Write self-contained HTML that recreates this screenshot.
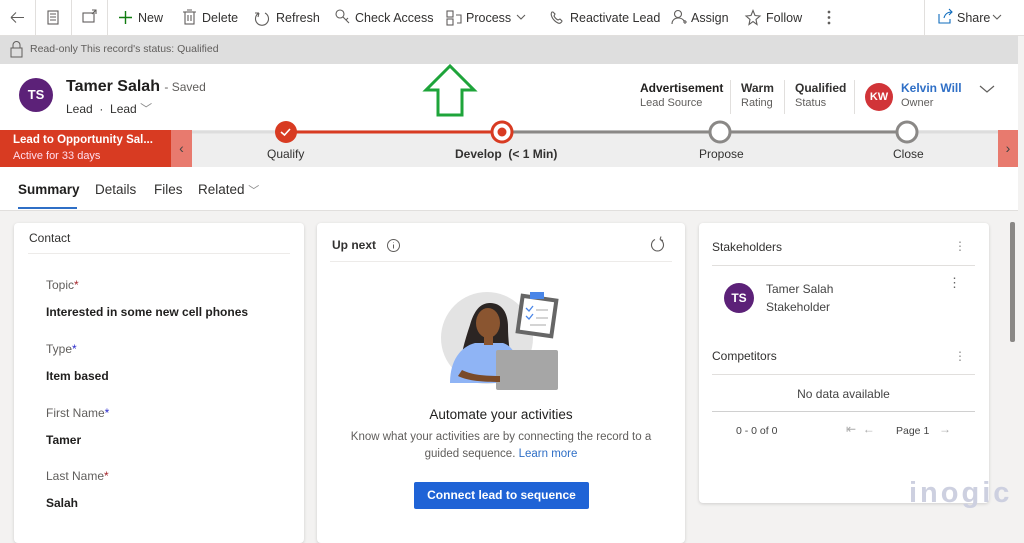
<!DOCTYPE html>
<html><head><meta charset="utf-8"><style>
*{box-sizing:border-box;margin:0;padding:0}
body{width:1024px;height:528px;overflow:hidden;font-family:"Liberation Sans",sans-serif;background:#f3f2f1;position:relative;color:#323130}
.a{position:absolute;white-space:nowrap}
.tb{font-size:12.5px;color:#323130}
.sep{position:absolute;top:0;width:1px;height:35px;background:#e1dfdd}
.card{position:absolute;background:#fff;border-radius:4px;box-shadow:0 1px 3px rgba(0,0,0,.15)}
.lbl{font-size:12px;color:#605e5c}
.val{font-size:12px;color:#201f1e;font-weight:bold}
.req{color:#a4262c}
</style></head><body>
<!-- toolbar -->
<div class="a" style="left:0;top:0;width:1024px;height:36px;background:#fff;border-bottom:1px solid #e1dfdd"></div>
<div class="sep" style="left:35px"></div><div class="sep" style="left:71px"></div><div class="sep" style="left:107px"></div><div class="sep" style="left:924px"></div>
<svg class="a" style="left:0;top:0" width="1024" height="36" fill="none" stroke="#605e5c" stroke-width="1.1">
<path d="M11 17.5h13M11 17.5l5-5M11 17.5l5 5"/>
<rect x="48" y="11" width="10" height="13"/><path d="M50 14h6M50 17h6M50 20h6"/>
<rect x="83" y="13" width="11" height="9"/><path d="M92 10l4 0 0 4M96 10l-4 4"/>
<path d="M119 17.5h13M125.5 11v13" stroke="#107c10" stroke-width="1.4"/>
<rect x="185" y="12" width="9" height="12"/><path d="M183 12h13M187 10h5M188 15v6M191 15v6"/>
<path d="M259 13a6.5 6.5 0 1 0 6 0M259 13l-1 4M259 13l-4 0"/>
<circle cx="340" cy="14" r="4"/><path d="M343 17l6 6M346 20l2-2"/>
<rect x="447" y="11" width="6" height="6"/><rect x="447" y="19" width="6" height="6"/><path d="M456 15h5v8h-4"/>
<path d="M517 15l4 4 4-4"/>
<path d="M552 12c-2 2 0 8 6 11 2 1 4-1 4-2l-2-2-2 1c-2-1-3-2-4-4l1-2-2-2z"/>
<circle cx="678" cy="14" r="3.5"/><path d="M672 24c0-4 3-6 6-6s5 1 6 3M683 22h4M685 20v4"/>
<path d="M753 10.5l2 5 5 .5-4 3.5 1 5-4-3-4 3 1-5-4-3.5 5-.5z"/>
<circle cx="829" cy="12" r=".8" fill="#605e5c"/><circle cx="829" cy="17.5" r=".8" fill="#605e5c"/><circle cx="829" cy="23" r=".8" fill="#605e5c"/>
<path d="M939 14v9h11v-4M944 18c1-4 4-6 8-6M949 9l3 3-3 3" stroke="#0f6cbd"/>
<path d="M993 15l4 4 4-4"/>
</svg>
<div class="a tb" style="left:138px;top:11px">New</div>
<div class="a tb" style="left:202px;top:11px">Delete</div>
<div class="a tb" style="left:276px;top:11px">Refresh</div>
<div class="a tb" style="left:355px;top:11px">Check Access</div>
<div class="a tb" style="left:466px;top:11px">Process</div>
<div class="a tb" style="left:570px;top:11px">Reactivate Lead</div>
<div class="a tb" style="left:691px;top:11px">Assign</div>
<div class="a tb" style="left:766px;top:11px">Follow</div>
<div class="a tb" style="left:957px;top:11px">Share</div>
<!-- readonly bar -->
<div class="a" style="left:0;top:36px;width:1018px;height:28px;background:#dedede"></div>
<svg class="a" style="left:9px;top:40px" width="16" height="20" fill="none" stroke="#605e5c" stroke-width="1"><rect x="2" y="8" width="11" height="9"/><path d="M4 8V5a3.5 3.5 0 0 1 7 0v3"/></svg>
<div class="a" style="left:30px;top:43px;font-size:10.5px;color:#605e5c">Read-only This record's status: Qualified</div>
<!-- header -->
<div class="a" style="left:0;top:64px;width:1018px;height:66px;background:#fff"></div>
<div class="a" style="left:1018px;top:36px;width:6px;height:492px;background:#f3f2f1"></div>
<div class="a" style="left:19px;top:78px;width:34px;height:34px;border-radius:50%;background:#5c2178;color:#fff;font-size:13px;font-weight:bold;text-align:center;line-height:34px">TS</div>
<div class="a" style="left:66px;top:78px;font-size:16px;font-weight:bold;color:#201f1e">Tamer Salah <span style="font-size:12px;font-weight:normal;color:#605e5c">- Saved</span></div>
<div class="a" style="left:66px;top:100px;font-size:12px;color:#323130">Lead &nbsp;·&nbsp; Lead <span style="color:#888">﹀</span></div>
<svg class="a" style="left:420px;top:62px" width="60" height="58"><path d="M30 4L6 28h12v25h24V28h12z" fill="none" stroke="#1ea43a" stroke-width="3"/></svg>
<div class="a" style="left:640px;top:81px;font-size:12px;font-weight:bold;color:#201f1e">Advertisement</div>
<div class="a lbl" style="left:640px;top:97px;font-size:11px">Lead Source</div>
<div class="a" style="left:730px;top:80px;width:1px;height:34px;background:#e1dfdd"></div>
<div class="a" style="left:741px;top:81px;font-size:12px;font-weight:bold">Warm</div>
<div class="a lbl" style="left:741px;top:97px;font-size:11px">Rating</div>
<div class="a" style="left:784px;top:80px;width:1px;height:34px;background:#e1dfdd"></div>
<div class="a" style="left:795px;top:81px;font-size:12px;font-weight:bold">Qualified</div>
<div class="a lbl" style="left:795px;top:97px;font-size:11px">Status</div>
<div class="a" style="left:854px;top:80px;width:1px;height:34px;background:#e1dfdd"></div>
<div class="a" style="left:865px;top:83px;width:28px;height:28px;border-radius:50%;background:#d13438;color:#fff;font-size:11px;font-weight:bold;text-align:center;line-height:28px">KW</div>
<div class="a" style="left:901px;top:81px;font-size:12px;font-weight:bold;color:#2f6fc6">Kelvin Will</div>
<div class="a lbl" style="left:901px;top:97px;font-size:11px">Owner</div>
<svg class="a" style="left:978px;top:82px" width="18" height="14"><path d="M2 4l7 6 7-6" fill="none" stroke="#605e5c" stroke-width="1.2"/></svg>
<!-- BPF -->
<div class="a" style="left:0;top:130px;width:1018px;height:37px;background:#eeeeee"></div>
<div class="a" style="left:0;top:130px;width:171px;height:37px;background:#d83b22"></div>
<div class="a" style="left:13px;top:134px;font-size:11.5px;font-weight:bold;color:#fff">Lead to Opportunity Sal...</div>
<div class="a" style="left:13px;top:150px;font-size:11px;color:#fde">Active for 33 days</div>
<div class="a" style="left:171px;top:130px;width:21px;height:37px;background:#e87a6e;color:#444;font-size:14px;text-align:center;line-height:37px">‹</div>
<div class="a" style="left:998px;top:130px;width:20px;height:37px;background:#e87a6e;color:#444;font-size:14px;text-align:center;line-height:37px">›</div>
<svg class="a" style="left:192px;top:118px" width="806" height="30">
<line x1="0" y1="14" x2="806" y2="14" stroke="#ddd" stroke-width="3"/>
<line x1="94" y1="14" x2="310" y2="14" stroke="#d83b22" stroke-width="3"/>
<line x1="310" y1="14" x2="715" y2="14" stroke="#8a8886" stroke-width="3"/>
<circle cx="94" cy="14" r="11" fill="#d83b22"/><path d="M89 14l3.5 3 5.5-6" stroke="#fff" fill="none" stroke-width="1.6"/>
<circle cx="310" cy="14" r="10" fill="#fff" stroke="#d83b22" stroke-width="3"/><circle cx="310" cy="14" r="4.5" fill="#d83b22"/>
<circle cx="528" cy="14" r="10" fill="#fff" stroke="#8a8886" stroke-width="3"/>
<circle cx="715" cy="14" r="10" fill="#fff" stroke="#8a8886" stroke-width="3"/>
</svg>
<div class="a" style="left:267px;top:147px;font-size:12px">Qualify</div>
<div class="a" style="left:455px;top:147px;font-size:12px;font-weight:bold">Develop &nbsp;(&lt; 1 Min)</div>
<div class="a" style="left:699px;top:147px;font-size:12px">Propose</div>
<div class="a" style="left:893px;top:147px;font-size:12px">Close</div>
<!-- tabs -->
<div class="a" style="left:0;top:167px;width:1018px;height:44px;background:#fff;border-bottom:1px solid #e1dfdd"></div>
<div class="a" style="left:18px;top:182px;font-size:13.5px;font-weight:bold;color:#201f1e">Summary</div>
<div class="a" style="left:18px;top:207px;width:59px;height:2px;background:#2f6fc6"></div>
<div class="a" style="left:95px;top:182px;font-size:13.5px">Details</div>
<div class="a" style="left:154px;top:182px;font-size:13.5px">Files</div>
<div class="a" style="left:198px;top:182px;font-size:13.5px">Related <span style="color:#888;font-size:11px">﹀</span></div>
<!-- contact card -->
<div class="card" style="left:14px;top:223px;width:290px;height:320px"></div>
<div class="a" style="left:29px;top:231px;font-size:12px;color:#323130">Contact</div>
<div class="a" style="left:28px;top:253px;width:262px;height:1px;background:#edebe9"></div>
<div class="a lbl" style="left:46px;top:278px">Topic<span class="req">*</span></div>
<div class="a val" style="left:46px;top:305px">Interested in some new cell phones</div>
<div class="a lbl" style="left:46px;top:342px">Type<span style="color:#2b2bcc">*</span></div>
<div class="a val" style="left:46px;top:369px">Item based</div>
<div class="a lbl" style="left:46px;top:406px">First Name<span style="color:#2b2bcc">*</span></div>
<div class="a val" style="left:46px;top:433px">Tamer</div>
<div class="a lbl" style="left:46px;top:469px">Last Name<span class="req">*</span></div>
<div class="a val" style="left:46px;top:496px">Salah</div>
<!-- up next -->
<div class="card" style="left:317px;top:223px;width:368px;height:320px"></div>
<div class="a" style="left:332px;top:238px;font-size:12px;font-weight:bold">Up next</div>
<svg class="a" style="left:386px;top:238px" width="16" height="16" fill="none" stroke="#605e5c"><circle cx="7.5" cy="7.5" r="6"/><path d="M7.5 6.5v4M7.5 4.5v.5"/></svg>
<svg class="a" style="left:649px;top:236px" width="18" height="18" fill="none" stroke="#605e5c" stroke-width="1.1"><path d="M6 3.5a6 6 0 1 0 5 0M11 3.5l1-3M11 3.5l3 1"/></svg>
<div class="a" style="left:330px;top:261px;width:342px;height:1px;background:#edebe9"></div>
<svg class="a" style="left:430px;top:288px" width="135" height="110">
<circle cx="57" cy="50" r="46" fill="#e3e3e3"/>
<path d="M30 95c-2-20 4-40 10-58 4-14 10-22 20-22 12 0 18 10 18 24 0 20 4 34 6 50z" fill="#2b2523"/>
<ellipse cx="58" cy="35" rx="12" ry="15" fill="#8a5530"/>
<path d="M20 95c0-22 10-36 25-40h28c12 4 16 16 16 40z" fill="#8fb4f5"/>
<rect x="54" y="47" width="9" height="10" fill="#8a5530"/>
<rect x="66" y="62" width="62" height="40" rx="2" fill="#a6a6a6"/>
<path d="M28 88c8 4 20 6 42 6v-6c-20 0-30-2-38-6z" fill="#7a4a28"/>
<rect x="88" y="8" width="38" height="40" fill="#666" transform="rotate(8 107 28)"/>
<rect x="92" y="12" width="30" height="32" fill="#fff" transform="rotate(8 107 28)"/>
<rect x="100" y="4" width="14" height="7" fill="#4a86e8"/>
<path d="M96 20l3 3 4-5M96 28l3 3 4-5" stroke="#4a86e8" fill="none" stroke-width="1.3"/>
<path d="M106 22h12M106 30h12M100 37h16" stroke="#aaa"/>
</svg>
<div class="a" style="left:317px;top:407px;width:368px;text-align:center;font-size:13.5px;color:#201f1e">Automate your activities</div>
<div class="a" style="left:317px;top:429px;width:368px;text-align:center;font-size:11.5px;color:#605e5c;white-space:normal;line-height:17px;padding:0 20px">Know what your activities are by connecting the record to a guided sequence. <span style="color:#2f6fc6">Learn more</span></div>
<div class="a" style="left:414px;top:482px;width:175px;height:27px;background:#1f63d6;border-radius:2px;color:#fff;font-size:12px;font-weight:bold;text-align:center;line-height:27px">Connect lead to sequence</div>
<!-- stakeholders -->
<div class="card" style="left:699px;top:223px;width:290px;height:280px"></div>
<div class="a" style="left:712px;top:240px;font-size:12px">Stakeholders</div>
<div class="a" style="left:954px;top:239px;font-size:12px;color:#888">⋮</div>
<div class="a" style="left:712px;top:265px;width:263px;height:1px;background:#e1dfdd"></div>
<div class="a" style="left:724px;top:283px;width:30px;height:30px;border-radius:50%;background:#5c2178;color:#fff;font-size:12px;font-weight:bold;text-align:center;line-height:30px">TS</div>
<div class="a" style="left:766px;top:282px;font-size:12px;color:#444">Tamer Salah</div>
<div class="a" style="left:766px;top:300px;font-size:12px;color:#444">Stakeholder</div>
<div class="a" style="left:948px;top:275px;font-size:13px;color:#666">⋮</div>
<div class="a" style="left:712px;top:349px;font-size:12px">Competitors</div>
<div class="a" style="left:954px;top:349px;font-size:12px;color:#888">⋮</div>
<div class="a" style="left:712px;top:374px;width:263px;height:1px;background:#e1dfdd"></div>
<div class="a" style="left:712px;top:387px;width:263px;text-align:center;font-size:12px;color:#444">No data available</div>
<div class="a" style="left:712px;top:411px;width:263px;height:1px;background:#d0d0d0"></div>
<div class="a" style="left:736px;top:425px;font-size:10.5px;color:#444">0 - 0 of 0</div>
<div class="a" style="left:846px;top:422px;font-size:12px;color:#aaa">⇤ &nbsp;←</div>
<div class="a" style="left:896px;top:425px;font-size:10.5px;color:#444">Page 1</div>
<div class="a" style="left:939px;top:422px;font-size:12px;color:#aaa">→</div>
<div class="a" style="left:909px;top:476px;font-size:29px;font-weight:bold;color:#cdd0e0;letter-spacing:3px;line-height:34px">inogic</div>
<div class="a" style="left:1010px;top:222px;width:5px;height:120px;background:#8a8886;border-radius:2px"></div>
</body></html>
